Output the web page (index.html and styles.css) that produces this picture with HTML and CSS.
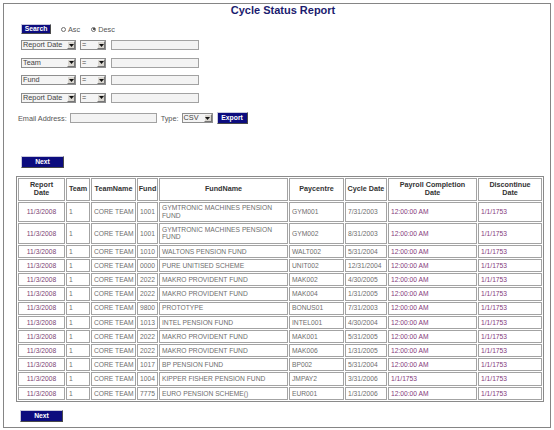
FILE: index.html
```html
<!DOCTYPE html>
<html>
<head>
<meta charset="utf-8">
<title>Cycle Status Report</title>
<link rel="stylesheet" href="styles.css">
</head>
<body>
<div class="frame">
  <h1 class="title">Cycle Status Report</h1>

  <div class="searchrow">
    <button class="btn btn-search">Search</button>
    <label class="radio r-asc"><span class="dot"></span>Asc</label>
    <label class="radio r-desc"><span class="dot on"></span>Desc</label>
  </div>

  <div class="filters">
    <div class="frow">
      <div class="sel w-field"><span class="sel-val">Report Date</span><span class="sel-btn"><svg width="5" height="3" viewBox="0 0 5 3"><path d="M0 0H5L2.5 3Z"/></svg></span></div>
      <div class="sel w-op"><span class="sel-val">=</span><span class="sel-btn"><svg width="5" height="3" viewBox="0 0 5 3"><path d="M0 0H5L2.5 3Z"/></svg></span></div>
      <div class="txt w-val"></div>
    </div>
    <div class="frow">
      <div class="sel w-field"><span class="sel-val">Team</span><span class="sel-btn"><svg width="5" height="3" viewBox="0 0 5 3"><path d="M0 0H5L2.5 3Z"/></svg></span></div>
      <div class="sel w-op"><span class="sel-val">=</span><span class="sel-btn"><svg width="5" height="3" viewBox="0 0 5 3"><path d="M0 0H5L2.5 3Z"/></svg></span></div>
      <div class="txt w-val"></div>
    </div>
    <div class="frow">
      <div class="sel w-field"><span class="sel-val">Fund</span><span class="sel-btn"><svg width="5" height="3" viewBox="0 0 5 3"><path d="M0 0H5L2.5 3Z"/></svg></span></div>
      <div class="sel w-op"><span class="sel-val">=</span><span class="sel-btn"><svg width="5" height="3" viewBox="0 0 5 3"><path d="M0 0H5L2.5 3Z"/></svg></span></div>
      <div class="txt w-val"></div>
    </div>
    <div class="frow">
      <div class="sel w-field"><span class="sel-val">Report Date</span><span class="sel-btn"><svg width="5" height="3" viewBox="0 0 5 3"><path d="M0 0H5L2.5 3Z"/></svg></span></div>
      <div class="sel w-op"><span class="sel-val">=</span><span class="sel-btn"><svg width="5" height="3" viewBox="0 0 5 3"><path d="M0 0H5L2.5 3Z"/></svg></span></div>
      <div class="txt w-val"></div>
    </div>
  </div>

  <div class="erow">
    <span class="lbl">Email Address:</span>
    <div class="txt w-email"></div>
    <span class="lbl lbl-type">Type:</span>
    <div class="sel w-type"><span class="sel-val">CSV</span><span class="sel-btn"><svg width="5" height="3" viewBox="0 0 5 3"><path d="M0 0H5L2.5 3Z"/></svg></span></div>
    <button class="btn btn-export">Export</button>
  </div>

  <button class="btn btn-next next-top">Next</button>

  <table class="grid">
    <colgroup>
      <col class="c-rd"><col class="c-team"><col class="c-tname"><col class="c-fund"><col class="c-fname"><col class="c-pay"><col class="c-cycle"><col class="c-payroll"><col class="c-disc">
    </colgroup>
    <thead>
      <tr><th>Report<br>Date</th><th>Team</th><th>TeamName</th><th>Fund</th><th>FundName</th><th>Paycentre</th><th>Cycle Date</th><th>Payroll Completion<br>Date</th><th>Discontinue<br>Date</th></tr>
    </thead>
    <tbody>
      <tr><td class="rd">11/3/2008</td><td>1</td><td>CORE TEAM</td><td>1001</td><td class="fn">GYMTRONIC MACHINES PENSION FUND</td><td>GYM001</td><td>7/31/2003</td><td class="pu">12:00:00 AM</td><td class="pu">1/1/1753</td></tr>
      <tr><td class="rd">11/3/2008</td><td>1</td><td>CORE TEAM</td><td>1001</td><td class="fn">GYMTRONIC MACHINES PENSION FUND</td><td>GYM002</td><td>8/31/2003</td><td class="pu">12:00:00 AM</td><td class="pu">1/1/1753</td></tr>
      <tr><td class="rd">11/3/2008</td><td>1</td><td>CORE TEAM</td><td>1010</td><td class="fn">WALTONS PENSION FUND</td><td>WALT002</td><td>5/31/2004</td><td class="pu">12:00:00 AM</td><td class="pu">1/1/1753</td></tr>
      <tr><td class="rd">11/3/2008</td><td>1</td><td>CORE TEAM</td><td>0000</td><td class="fn">PURE UNITISED SCHEME</td><td>UNIT002</td><td>12/31/2004</td><td class="pu">12:00:00 AM</td><td class="pu">1/1/1753</td></tr>
      <tr><td class="rd">11/3/2008</td><td>1</td><td>CORE TEAM</td><td>2022</td><td class="fn">MAKRO PROVIDENT FUND</td><td>MAK002</td><td>4/30/2005</td><td class="pu">12:00:00 AM</td><td class="pu">1/1/1753</td></tr>
      <tr><td class="rd">11/3/2008</td><td>1</td><td>CORE TEAM</td><td>2022</td><td class="fn">MAKRO PROVIDENT FUND</td><td>MAK004</td><td>1/31/2005</td><td class="pu">12:00:00 AM</td><td class="pu">1/1/1753</td></tr>
      <tr><td class="rd">11/3/2008</td><td>1</td><td>CORE TEAM</td><td>9800</td><td class="fn">PROTOTYPE</td><td>BONUS01</td><td>7/31/2003</td><td class="pu">12:00:00 AM</td><td class="pu">1/1/1753</td></tr>
      <tr><td class="rd">11/3/2008</td><td>1</td><td>CORE TEAM</td><td>1013</td><td class="fn">INTEL PENSION FUND</td><td>INTEL001</td><td>4/30/2004</td><td class="pu">12:00:00 AM</td><td class="pu">1/1/1753</td></tr>
      <tr><td class="rd">11/3/2008</td><td>1</td><td>CORE TEAM</td><td>2022</td><td class="fn">MAKRO PROVIDENT FUND</td><td>MAK001</td><td>5/31/2005</td><td class="pu">12:00:00 AM</td><td class="pu">1/1/1753</td></tr>
      <tr><td class="rd">11/3/2008</td><td>1</td><td>CORE TEAM</td><td>2022</td><td class="fn">MAKRO PROVIDENT FUND</td><td>MAK006</td><td>1/31/2005</td><td class="pu">12:00:00 AM</td><td class="pu">1/1/1753</td></tr>
      <tr><td class="rd">11/3/2008</td><td>1</td><td>CORE TEAM</td><td>1017</td><td class="fn">BP PENSION FUND</td><td>BP002</td><td>5/31/2004</td><td class="pu">12:00:00 AM</td><td class="pu">1/1/1753</td></tr>
      <tr><td class="rd">11/3/2008</td><td>1</td><td>CORE TEAM</td><td>1004</td><td class="fn">KIPPER FISHER PENSION FUND</td><td>JMPAY2</td><td>3/31/2006</td><td class="pu">1/1/1753</td><td class="pu">1/1/1753</td></tr>
      <tr><td class="rd">11/3/2008</td><td>1</td><td>CORE TEAM</td><td>7775</td><td class="fn">EURO PENSION SCHEME()</td><td>EUR001</td><td>1/31/2006</td><td class="pu">12:00:00 AM</td><td class="pu">1/1/1753</td></tr>
    </tbody>
  </table>

  <button class="btn btn-next next-bottom">Next</button>
</div>
</body>
</html>
```

FILE: styles.css
```css
html, body {
  margin: 0;
  padding: 0;
  background: #ffffff;
}

body {
  font-family: "Liberation Sans", Arial, sans-serif;
  color: #555555;
}

.frame {
  box-sizing: border-box;
  width: 548px;
  height: 425px;
  margin: 3px 0 0 3px;
  border: 1px solid #858585;
  padding-left: 12px;
}

.title {
  margin: 0;
  font-size: 11px;
  line-height: 13px;
  font-weight: bold;
  color: #1b1b6e;
  text-align: center;
}

/* buttons */
.btn {
  display: block;
  box-sizing: border-box;
  margin: 0;
  padding: 0;
  background: #0c0c7e;
  color: #ffffff;
  font-family: "Liberation Sans", Arial, sans-serif;
  font-weight: bold;
  font-size: 6.8px;
  line-height: 8px;
  text-align: center;
  border: 1px solid;
  border-color: #c9c9dc #4a4a4a #4a4a4a #c9c9dc;
}

.btn-search {
  width: 30px;
  height: 10px;
}

.btn-export {
  width: 31px;
  height: 12px;
  margin-left: 4px;
}

.btn-next {
  width: 43px;
  height: 12px;
}

.next-top {
  margin: 32px 0 0 5px;
}

.next-bottom {
  margin: 8px 0 0 4px;
}

/* search row */
.searchrow {
  display: flex;
  align-items: center;
  height: 10px;
  margin: 7px 0 0 5px;
}

.radio {
  display: inline-flex;
  align-items: center;
  gap: 2px;
  font-size: 7.3px;
  color: #555555;
}

.r-asc {
  margin-left: 10px;
}

.r-desc {
  margin-left: 11px;
}

.dot {
  box-sizing: border-box;
  width: 5px;
  height: 5px;
  border: 1px solid #6f6f6f;
  border-radius: 50%;
  background: #ffffff;
  position: relative;
}

.dot.on::after {
  content: "";
  position: absolute;
  left: 0.5px;
  top: 0.5px;
  width: 2px;
  height: 2px;
  border-radius: 50%;
  background: #222222;
}

/* filters */
.filters {
  display: flex;
  flex-direction: column;
  gap: 7.5px;
  margin: 6px 0 0 5px;
}

.frow {
  display: flex;
  gap: 4px;
  height: 10px;
}

.sel {
  display: flex;
  box-sizing: border-box;
  height: 10px;
  border: 1px solid #8e8e8e;
  background: #f4f4f4;
}

.sel-val {
  flex: 1;
  overflow: hidden;
  white-space: nowrap;
  padding-left: 1px;
  font-size: 7.3px;
  line-height: 8px;
  color: #444444;
}

.sel-btn {
  box-sizing: border-box;
  width: 8px;
  display: flex;
  align-items: center;
  justify-content: center;
  background: #d9d6d0;
  border: 1px solid;
  border-color: #f4f4f4 #777777 #777777 #f4f4f4;
}

.sel-btn svg {
  display: block;
  fill: #111111;
}

.txt {
  box-sizing: border-box;
  height: 10px;
  border: 1px solid #a2a2a2;
  background: #f3f3f3;
}

.w-field { width: 55px; }
.w-op { width: 26px; }
.w-val { width: 88px; margin-left: 1px; }
.w-email { width: 87px; margin-left: 3px; }
.w-type { width: 31px; margin-left: 3px; }

/* email row */
.erow {
  display: flex;
  align-items: center;
  height: 12px;
  margin: 9.5px 0 0 2px;
}

.lbl {
  font-size: 7.3px;
  color: #555555;
}

.lbl-type {
  margin-left: 4px;
}

/* table */
.grid {
  width: 528px;
  margin-top: 8px;
  table-layout: fixed;
  border-collapse: separate;
  border-spacing: 1px;
  border: 1px solid #8a8a8a;
}

.c-rd { width: 47px; }
.c-team { width: 24px; }
.c-tname { width: 45px; }
.c-fund { width: 21px; }
.c-fname { width: 129px; }
.c-pay { width: 55px; }
.c-cycle { width: 42px; }
.c-payroll { width: 89px; }
.c-disc { width: 64px; }

.grid th,
.grid td {
  border: 1px solid #a3a3a3;
  vertical-align: middle;
}

.grid th {
  padding: 1.9px 0;
  font-size: 7.2px;
  line-height: 8.4px;
  font-weight: bold;
  color: #333333;
  text-align: center;
  white-space: nowrap;
}

.grid td {
  padding: 1.9px 2px;
  font-size: 6.7px;
  line-height: 7.4px;
  color: #6e6e6e;
  text-align: left;
  white-space: nowrap;
}

.grid td.fn {
  white-space: normal;
}

.grid td.rd {
  text-align: center;
  color: #7c3f74;
}

.grid td.pu {
  color: #853a7c;
}
```
